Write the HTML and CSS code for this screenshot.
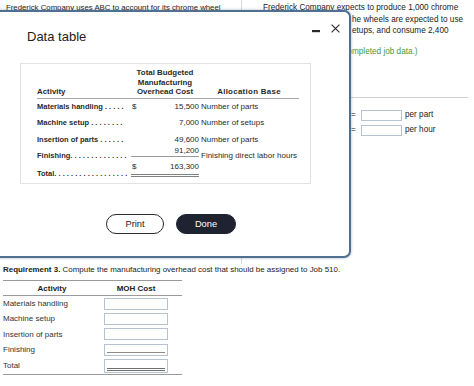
FILE: index.html
```html
<!DOCTYPE html>
<html>
<head>
<meta charset="utf-8">
<title>Data table</title>
<link rel="stylesheet" href="styles.css">
</head>
<body>
<div class="page">
  <div class="top">
    <div class="col-left">
      <p>Frederick Company uses ABC to account for its chrome wheel manufacturing process. Company managers have identified four manufacturing activities and their budgeted costs.</p>
    </div>
    <div class="col-right">
      <p class="intro">
        <span class="ln">Frederick Company expects to produce 1,000 chrome</span>
        <span class="ln"><span class="hid">wheels for Job 510. T</span>he wheels are expected to use</span>
        <span class="ln"><span class="hid">400 parts, require 6 s</span>etups, and consume 2,400</span>
      </p>
      <p class="link"><span class="hid">(Click the icon to view the co</span>mpleted job data.)</p>
      <div class="rule"></div>
      <div class="rate"><span class="hid">Finishing rate</span><span class="eq">=</span><span class="field"></span><span class="unit">per part</span></div>
      <div class="rate"><span class="hid">Finishing rate</span><span class="eq">=</span><span class="field"></span><span class="unit">per hour</span></div>
    </div>
  </div>

  <p class="req"><b>Requirement 3.</b> Compute the manufacturing overhead cost that should be assigned to Job 510.</p>
  <table class="moh">
    <thead>
      <tr><th class="m1">Activity</th><th class="m2">MOH Cost</th><th class="m3"></th></tr>
    </thead>
    <tbody>
      <tr><td>Materials handling</td><td><span class="inp"></span></td><td></td></tr>
      <tr><td>Machine setup</td><td><span class="inp"></span></td><td></td></tr>
      <tr><td>Insertion of parts</td><td><span class="inp"></span></td><td></td></tr>
      <tr><td>Finishing</td><td><span class="inp"><span class="sl"></span></span></td><td></td></tr>
      <tr class="tot"><td>Total</td><td><span class="inp big"><span class="dl"></span></span></td><td></td></tr>
    </tbody>
  </table>
</div>

<div class="modal">
  <div class="mhead">
    <h2 class="mtitle">Data table</h2>
    <div class="mctrl">
      <svg class="ic-min" width="8" height="9" viewBox="0 0 8 9"><rect x="0" y="6" width="8" height="2.2" fill="#2a2a2a"/></svg>
      <svg class="ic-x" width="9" height="9" viewBox="0 0 9 9"><path d="M0.6 0.6 L8.4 8.4 M8.4 0.6 L0.6 8.4" stroke="#2a2a2a" stroke-width="1.1" fill="none"/></svg>
    </div>
  </div>
  <div class="dbox">
    <table class="dt">
      <thead>
        <tr>
          <th class="c1">Activity</th>
          <th class="c2">Total Budgeted<br>Manufacturing<br>Overhead Cost</th>
          <th class="c3">Allocation Base</th>
        </tr>
      </thead>
      <tbody>
        <tr class="r">
          <td class="c1">Materials handling . . . . .</td>
          <td class="c2"><div class="amt"><span>$</span><span>15,500</span></div></td>
          <td class="c3">Number of parts</td>
        </tr>
        <tr class="r">
          <td class="c1">Machine setup . . . . . . . .</td>
          <td class="c2"><div class="amt"><span></span><span>7,000</span></div></td>
          <td class="c3">Number of setups</td>
        </tr>
        <tr class="r">
          <td class="c1">Insertion of parts . . . . . .</td>
          <td class="c2"><div class="amt"><span></span><span>49,600</span></div></td>
          <td class="c3">Number of parts</td>
        </tr>
        <tr class="fin">
          <td class="c1">Finishing. . . . . . . . . . . . . .</td>
          <td class="c2"><div class="amt single"><span></span><span>91,200</span></div></td>
          <td class="c3">Finishing direct labor hours</td>
        </tr>
        <tr class="total">
          <td class="c1">Total. . . . . . . . . . . . . . . . . .</td>
          <td class="c2"><div class="amt double"><span>$</span><span>163,300</span></div></td>
          <td class="c3"></td>
        </tr>
      </tbody>
    </table>
  </div>
  <div class="actions">
    <button class="btn print" type="button">Print</button>
    <button class="btn done" type="button">Done</button>
  </div>
</div>
</body>
</html>
```

FILE: styles.css
```css
* { box-sizing: border-box; margin: 0; padding: 0; }
html, body { background: #fff; }
body {
  font-family: "Liberation Sans", Arial, sans-serif;
  color: #222;
  width: 474px;
  height: 386px;
  overflow: hidden;
  position: relative;
}
.page { padding-left: 3px; }

/* background question area */
.top {
  display: grid;
  grid-template-columns: 239px 1fr;
  height: 264px;
  overflow: hidden;
}
.col-left {
  border-right: 1px solid #d9d9d9;
  padding: 2px 6px 0 3px;
  font-size: 7.8px;
  line-height: 11.5px;
}
.col-right {
  padding: 2px 6px 0 21px;
  font-size: 8.2px;
  line-height: 11.5px;
}
.ln { display: block; white-space: nowrap; }
.hid {
  display: inline-block;
  width: 89px;
  height: 11.5px;
  overflow: hidden;
  white-space: nowrap;
  vertical-align: top;
}
.link { margin-top: 9.5px; color: #4a983a; white-space: nowrap; }
.rule { margin-top: 39px; border-top: 1px solid #d0d0d0; }
.rate {
  display: flex;
  align-items: center;
  height: 15px;
  white-space: nowrap;
}
.rate .hid { width: 88px; }
.eq { width: 10px; }
.field {
  width: 41px;
  height: 11px;
  border: 1px solid #b6c3d1;
  margin-right: 3px;
}
.rule + .rate { margin-top: 10px; }

/* requirement 3 */
.req { font-size: 7.95px; line-height: 12px; white-space: nowrap; }
.moh {
  width: 179px;
  border-collapse: collapse;
  margin-top: 4px;
  font-size: 8px;
  table-layout: fixed;
}
.moh thead tr { border-top: 1px solid #9a9a9a; border-bottom: 1px solid #9a9a9a; }
.moh tbody tr:last-child { border-bottom: 1px solid #9a9a9a; }
.moh th { height: 15px; font-weight: bold; text-align: center; color: #222; }
.moh .m1 { width: 98px; }
.moh .m2 { width: 70px; }
.moh .m3 { width: 11px; }
.moh td { height: 15.5px; padding: 0; vertical-align: middle; color: #333; white-space: nowrap; }
.moh tr.tot td { height: 17px; }
.inp {
  display: block;
  width: 64px;
  height: 12px;
  margin: 0 auto;
  border: 1px solid #b6c3d1;
  background: #fff;
}
.inp.big { height: 14px; }
.sl { display: block; margin: 7px 2px 0; border-bottom: 1px solid #8a8a8a; }
.dl { display: block; margin: 8px 2px 0; border-bottom: 3px double #6f6f6f; }

/* modal */
.modal {
  position: absolute;
  left: -18px;
  top: 10px;
  width: 369px;
  height: 248px;
  background: #fff;
  border: 2px solid #51708f;
  border-radius: 7px;
  box-shadow: 0 0 3px rgba(50, 90, 140, 0.45);
  padding: 17px 9px 0 36px;
}
.mhead { display: flex; justify-content: space-between; align-items: flex-start; }
.mtitle {
  font-size: 13px;
  line-height: 16px;
  font-weight: normal;
  margin-left: 7px;
  color: #1d1d1d;
}
.mctrl { display: flex; gap: 11px; margin-top: -5.5px; }
.mctrl svg { display: block; }

.dbox {
  margin-top: 18px;
  width: 291px;
  height: 121px;
  border: 1px solid #e2e2e2;
  padding: 4px 0 0 16px;
}
.dt {
  border-collapse: collapse;
  table-layout: fixed;
  width: 262px;
  font-size: 8px;
  line-height: 9.5px;
  color: #2a2a2a;
}
.dt th {
  font-size: 7.9px;
  font-weight: bold;
  vertical-align: bottom;
  padding-bottom: 1px;
  border-bottom: 1px solid #a8a8a8;
}
.dt th.c1 { text-align: left; }
.dt th.c2 { text-align: center; }
.dt th.c3 { text-align: center; letter-spacing: 0.3px; }
.dt .c1 { width: 94px; }
.dt .c2 { width: 68px; }
.dt .c3 { width: 100px; }
.dt td { padding: 0; white-space: nowrap; overflow: hidden; }
.dt td.c1 { font-weight: bold; font-size: 7.5px; }
.dt td.c3 { padding-left: 2px; }
.dt tr.r td { height: 16.7px; vertical-align: middle; }
.amt { display: flex; justify-content: space-between; padding-left: 1px; }
.dt tr.fin td { height: 12px; vertical-align: bottom; }
.dt tr.fin td.c2 { vertical-align: top; }
.amt.single { margin-top: -2px; border-bottom: 1px solid #9a9a9a; }
.dt tr.total td { height: 18px; vertical-align: bottom; }
.dt tr.total td.c2 { vertical-align: top; }
.amt.double { padding-top: 2px; padding-bottom: 2.5px; border-bottom: 3px double #808080; }

.actions {
  display: flex;
  justify-content: center;
  gap: 12px;
  margin-top: 30px;
  padding-right: 18px;
}
.btn {
  height: 20px;
  border-radius: 10px;
  font-family: "Liberation Sans", Arial, sans-serif;
  font-size: 9.3px;
  display: flex;
  align-items: center;
  justify-content: center;
  cursor: pointer;
}
.print { width: 58px; border: 1px solid #2b2b2b; background: #fff; color: #222; }
.done { width: 60px; border: 1px solid #1f2231; background: #1f2231; color: #fff; }
```
